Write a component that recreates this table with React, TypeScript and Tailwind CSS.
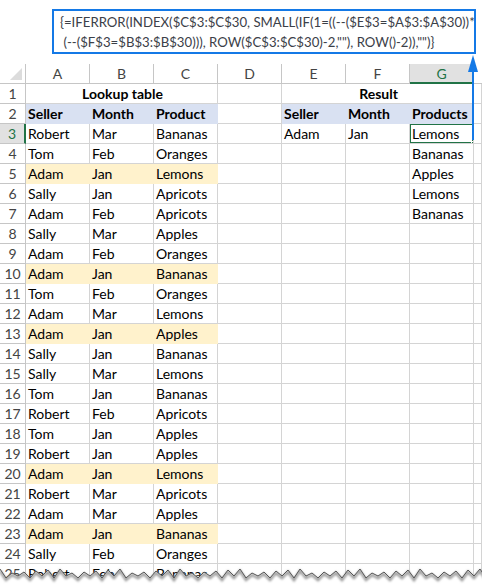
import React from "react";

type DataRow = [string, string, string, boolean];

const data: DataRow[] = [
  ["Robert", "Mar", "Bananas", false],
  ["Tom", "Feb", "Oranges", false],
  ["Adam", "Jan", "Lemons", true],
  ["Sally", "Jan", "Apricots", false],
  ["Adam", "Feb", "Apricots", false],
  ["Sally", "Mar", "Apples", false],
  ["Adam", "Feb", "Oranges", false],
  ["Adam", "Jan", "Bananas", true],
  ["Tom", "Feb", "Oranges", false],
  ["Adam", "Mar", "Lemons", false],
  ["Adam", "Jan", "Apples", true],
  ["Sally", "Jan", "Bananas", false],
  ["Sally", "Mar", "Lemons", false],
  ["Tom", "Jan", "Bananas", false],
  ["Robert", "Feb", "Apricots", false],
  ["Tom", "Jan", "Apples", false],
  ["Robert", "Jan", "Apples", false],
  ["Adam", "Jan", "Lemons", true],
  ["Robert", "Mar", "Apricots", false],
  ["Adam", "Mar", "Apples", false],
  ["Adam", "Jan", "Bananas", true],
  ["Sally", "Feb", "Oranges", false],
  ["Robert", "Feb", "Bananas", false],
];

const results = ["Lemons", "Bananas", "Apples", "Lemons", "Bananas"];

const cell = "h-[20px] border-r border-b border-[#d4d4d4] pl-[2px] flex items-center overflow-hidden whitespace-nowrap";
const rowHead = "h-[20px] border-r border-b border-[#c6c6c6] flex items-center justify-center text-[#444]";

function TornEdge() {
  const pts: [number, number][] = [];
  let i = 0;
  for (let x = 0; x <= 490; x += 6) {
    const y = i % 2 === 0 ? 6 + ((i * 7) % 5) : 12 + ((i * 3) % 4);
    pts.push([x, y]);
    i++;
  }
  const line = pts.map(([x, y]) => `${x},${y}`).join(" ");
  const shadow = pts.map(([x, y]) => `${x},${y + 2}`).join(" ");
  return (
    <svg className="absolute left-0 top-[563px]" width="482" height="21" viewBox="0 0 482 21">
      <defs>
        <filter id="blur" x="-5%" y="-50%" width="110%" height="200%">
          <feGaussianBlur stdDeviation="1.2" />
        </filter>
      </defs>
      <polygon points={`${line} 490,21 0,21`} fill="#ffffff" />
      <polyline points={shadow} fill="none" stroke="#9a9a9a" strokeWidth="2.5" filter="url(#blur)" />
      <polyline points={line} fill="none" stroke="#555" strokeWidth="1" />
    </svg>
  );
}

export default function App() {
  return (
    <div className="relative w-[482px] h-[584px] overflow-hidden bg-white font-['Lato','Liberation_Sans',sans-serif] text-[14px] text-black">
      {/* formula callout */}
      <div className="h-[64px] pt-[9px] pl-[52px]">
        <div className="w-[424px] h-[45px] border-2 border-[#1479e6] pt-[1px] pl-[6px] text-[13.2px] leading-[20px] text-[#3b4048] whitespace-pre">
          <div>{'{=IFERROR(INDEX($C$3:$C$30, SMALL(IF(1=((--($E$3=$A$3:$A$30))*'}</div>
          <div>{' (--($F$3=$B$3:$B$30))), ROW($C$3:$C$30)-2,""), ROW()-2)),"")}'}</div>
        </div>
      </div>

      {/* sheet */}
      <div className="grid grid-cols-[26px_repeat(7,64px)_8px]">
        {/* column headers */}
        <div className="relative h-[20px] border-r border-b border-[#c6c6c6]">
          <div className="absolute right-[3px] bottom-[3px] w-0 h-0 border-l-[12px] border-l-transparent border-b-[12px] border-b-[#dcdcdc]" />
        </div>
        {["A", "B", "C", "D", "E", "F"].map((c) => (
          <div key={c} className="h-[20px] border-r border-b border-[#c6c6c6] flex items-center justify-center text-[#444]">
            {c}
          </div>
        ))}
        <div className="h-[20px] bg-[#e1e1e1] border-r border-[#c6c6c6] border-b-2 border-b-[#217346] flex items-center justify-center text-[#217346]">
          G
        </div>
        <div className="h-[20px] border-b border-[#c6c6c6]" />

        {/* row 1 */}
        <div className={rowHead}>1</div>
        <div className={`${cell} col-span-3 justify-center font-bold`}>Lookup table</div>
        <div className={cell} />
        <div className={`${cell} col-span-3 justify-center font-bold`}>Result</div>
        <div className={cell} />

        {/* row 2 */}
        <div className={rowHead}>2</div>
        {["Seller", "Month", "Product"].map((t) => (
          <div key={t} className={`${cell} bg-[#d9e1f2] border-[#d9e1f2] font-bold`}>{t}</div>
        ))}
        <div className={cell} />
        {["Seller", "Month", "Products"].map((t) => (
          <div key={t} className={`${cell} bg-[#d9e1f2] border-[#d9e1f2] font-bold`}>{t}</div>
        ))}
        <div className={cell} />

        {/* data rows */}
        {data.map((r, idx) => {
          const n = idx + 3;
          const hl = r[3];
          const dataCell = hl ? `${cell} bg-[#fff2cc] border-[#fff2cc]` : cell;
          return (
            <React.Fragment key={n}>
              {n === 3 ? (
                <div className="h-[20px] bg-[#e1e1e1] border-b border-[#c6c6c6] border-r-2 border-r-[#217346] flex items-center justify-center text-[#217346]">
                  3
                </div>
              ) : (
                <div className={rowHead}>{n}</div>
              )}
              <div className={dataCell}>{r[0]}</div>
              <div className={dataCell}>{r[1]}</div>
              <div className={dataCell}>{r[2]}</div>
              <div className={cell} />
              <div className={cell}>{n === 3 ? "Adam" : ""}</div>
              <div className={cell}>{n === 3 ? "Jan" : ""}</div>
              {n === 3 ? (
                <div className={`${cell} relative`}>
                  {results[0]}
                  <div className="absolute left-[-1px] top-[-1px] w-[65px] h-[21px] border-2 border-[#217346]" />
                  <div className="absolute right-[-3px] bottom-[-3px] w-[5px] h-[5px] bg-[#217346] border border-white" />
                </div>
              ) : (
                <div className={cell}>{results[n - 3] ?? ""}</div>
              )}
              <div className={cell} />
            </React.Fragment>
          );
        })}
      </div>

      {/* arrow from formula to result cell */}
      <svg className="absolute left-[467px] top-[54px]" width="12" height="88" viewBox="0 0 12 88">
        <line x1="6" y1="10" x2="6" y2="86" stroke="#1479e6" strokeWidth="2" />
        <polygon points="1,18 6,1 11,18" fill="#1479e6" />
      </svg>

      <TornEdge />
    </div>
  );
}
